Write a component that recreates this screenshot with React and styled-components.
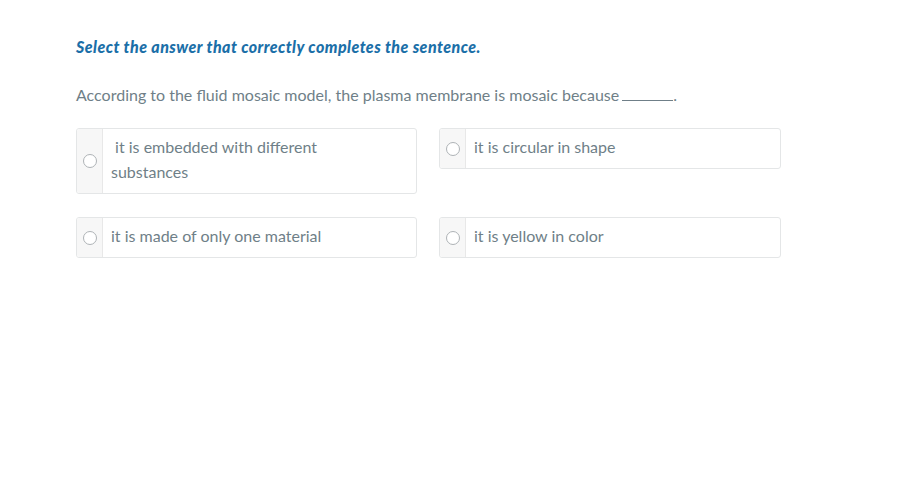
import React from 'react';
import styled, { createGlobalStyle } from 'styled-components';

const GlobalStyle = createGlobalStyle`
  body {
    margin: 0;
    background: #ffffff;
    font-family: "Lato", "Open Sans", sans-serif;
  }
`;

const Page = styled.div`
  padding: 36px 76px;
  width: 705px;
`;

const Instruction = styled.h2`
  margin: 0 0 25px;
  font-size: 16px;
  font-weight: 900;
  font-style: italic;
  letter-spacing: 0.45px;
  color: #1b6fa8;
  line-height: 22px;
`;

const Question = styled.p`
  margin: 0 0 21px;
  font-size: 16px;
  color: #6f7f88;
  line-height: 24px;
`;

const Blank = styled.span`
  display: inline-block;
  width: 51px;
  border-bottom: 1px solid #6f7f88;
  height: 16px;
  margin-left: 3px;
`;

const Options = styled.div`
  display: grid;
  grid-template-columns: 341px 342px;
  column-gap: 22px;
  row-gap: 23px;
  align-items: start;
`;

const Option = styled.label`
  display: flex;
  border: 1px solid #e4e6e7;
  border-radius: 3px;
  background: #fff;
  cursor: pointer;
  overflow: hidden;
`;

const RadioCell = styled.div`
  width: 25px;
  flex: none;
  background: #f7f7f7;
  border-right: 1px solid #e8e8e8;
  display: flex;
  align-items: center;
  justify-content: center;
`;

const Radio = styled.span`
  width: 12px;
  height: 12px;
  border-radius: 50%;
  border: 1px solid #aeb3b6;
  background: #fff;
`;

const OptionText = styled.div`
  padding: 5px 8px 9px;
  font-size: 16px;
  line-height: 25px;
  color: #6f7f88;
  white-space: pre-wrap;
  width: 220px;
`;

const options = [
  ' it is embedded with different substances',
  'it is circular in shape',
  'it is made of only one material',
  'it is yellow in color',
];

const App = () => (
  <>
    <GlobalStyle />
    <Page>
      <Instruction>Select the answer that correctly completes the sentence.</Instruction>
      <Question>
        According to the fluid mosaic model, the plasma membrane is mosaic because
        <Blank />.
      </Question>
      <Options>
        {options.map((text, i) => (
          <Option key={i}>
            <RadioCell>
              <Radio />
            </RadioCell>
            <OptionText>{text}</OptionText>
          </Option>
        ))}
      </Options>
    </Page>
  </>
);

export default App;
